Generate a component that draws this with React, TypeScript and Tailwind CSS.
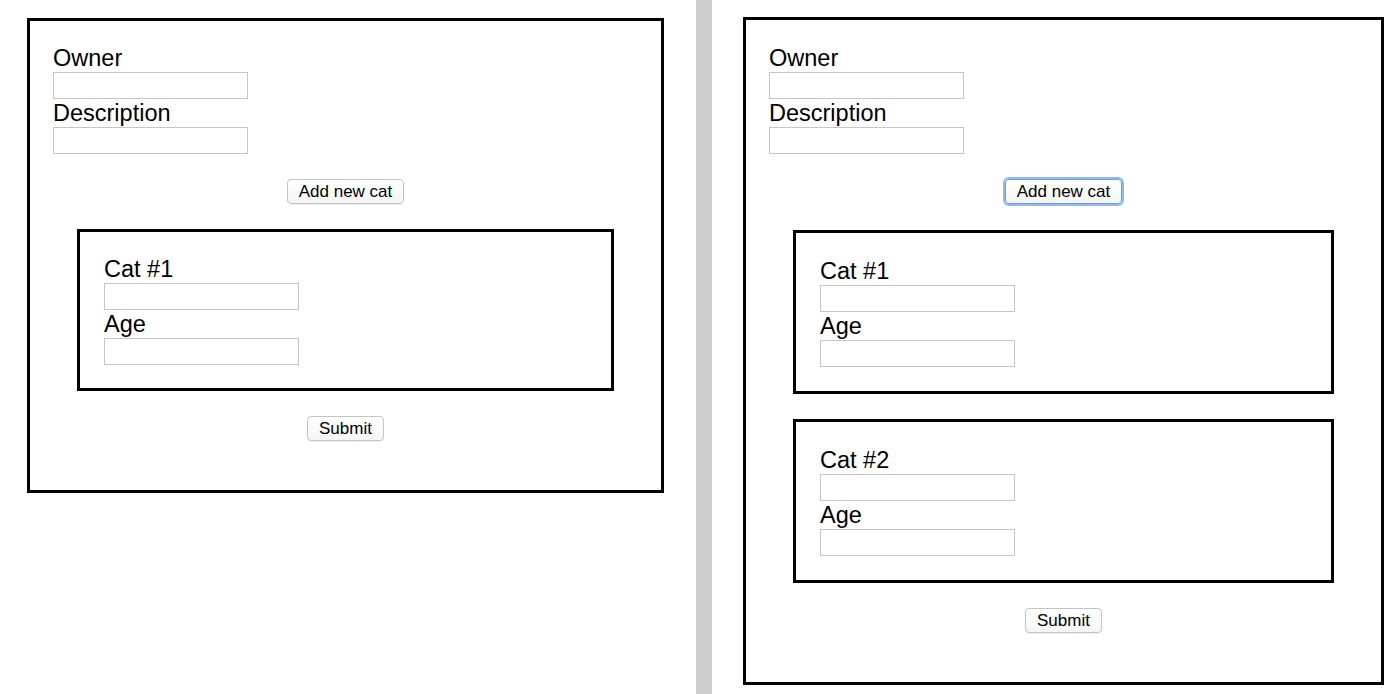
import React from "react";

function Field({ label }: { label: string }) {
  return (
    <div>
      <label className="block text-[23.5px] leading-[28px]">{label}</label>
      <input
        type="text"
        className="block h-[27px] w-[195px] border border-[#c6c6c6] bg-white outline-none"
      />
    </div>
  );
}

function Btn({ children, focused }: { children: React.ReactNode; focused?: boolean }) {
  return (
    <button
      type="button"
      className={
        focused
          ? "h-[25px] rounded-[4px] border border-[#6e9fe6] bg-gradient-to-b from-white to-[#f5f5f5] px-[11px] text-[17px] leading-[20px] shadow-[0_0_0_2px_#8fb7f1]"
          : "h-[25px] rounded-[4px] border border-[#c4c4c4] bg-gradient-to-b from-white to-[#f5f5f5] px-[11px] text-[17px] leading-[20px] shadow-[0_1px_0_rgba(0,0,0,0.06)]"
      }
    >
      {children}
    </button>
  );
}

function CatBox({ n, big }: { n: number; big?: boolean }) {
  return (
    <div
      className={
        big
          ? "mx-[24px] border-[3px] border-black px-[24px] py-[24px]"
          : "mx-[24px] border-[3px] border-black px-[24px] py-[23px]"
      }
    >
      <Field label={`Cat #${n}`} />
      <Field label="Age" />
    </div>
  );
}

// the right-hand capture is a hair larger than the left one
function Panel({ cats, focused, big }: { cats: number; focused?: boolean; big?: boolean }) {
  return (
    <form
      className={
        big
          ? "w-[641px] border-[3px] border-black px-[23px] pt-[24px] pb-[49px]"
          : "w-[637px] border-[3px] border-black px-[23px] pt-[23px] pb-[49px]"
      }
    >
      <Field label="Owner" />
      <Field label="Description" />
      <div className="mt-[25px] flex justify-center">
        <Btn focused={focused}>Add new cat</Btn>
      </div>
      <div className={big ? "mt-[26px] flex flex-col gap-[25px]" : "mt-[25px] flex flex-col gap-[25px]"}>
        {Array.from({ length: cats }, (_, i) => (
          <CatBox key={i} n={i + 1} big={big} />
        ))}
      </div>
      <div className="mt-[25px] flex justify-center">
        <Btn>Submit</Btn>
      </div>
    </form>
  );
}

export default function App() {
  return (
    <div className="flex h-[694px] w-[1400px] overflow-hidden bg-white font-['Liberation_Sans',Arial,sans-serif] text-black">
      {/* before */}
      <div className="w-[696px] pl-[27px] pt-[18px]">
        <Panel cats={1} />
      </div>
      <div className="w-[16px] bg-[#cccccc]" />
      {/* after clicking add */}
      <div className="flex-1 pl-[31px] pt-[17px]">
        <Panel cats={2} focused big />
      </div>
    </div>
  );
}
